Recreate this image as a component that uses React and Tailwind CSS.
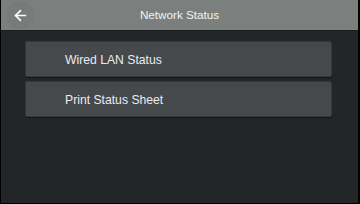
import { ArrowLeft } from 'lucide-react';

const ITEMS = ['Wired LAN Status', 'Print Status Sheet'];

export default function App() {
  return (
    <div
      className="w-[360px] h-[204px] flex flex-col bg-[#222628] border-l border-r-2 border-b border-black overflow-hidden"
      style={{ fontFamily: '"Liberation Sans", Arial, sans-serif' }}
    >
      <div className="h-[31px] flex-shrink-0 flex items-center pl-[5px] bg-[#7b7f7e] border-b border-[#1b1e1f] relative">
        <button className="w-[28px] h-[28px] rounded-full flex items-center justify-center bg-[#777b7a]">
          <ArrowLeft className="w-[17px] h-[17px] text-white" strokeWidth={2.4} />
        </button>
        <h1 className="absolute left-0 right-0 text-center text-[11.7px] text-[#f2f2f2] pointer-events-none">
          Network Status
        </h1>
      </div>

      <div className="flex flex-col gap-[4px] pt-[10px] pl-[24px] pr-[26px]">
        {ITEMS.map(label => (
          <button
            key={label}
            className="h-[36px] w-full flex items-center pl-[39px] pt-[2px] text-left text-[12.2px] text-[#ececec] bg-[#45494c] rounded-[2px] border border-[#35393b] shadow-[0_1px_1px_rgba(0,0,0,0.5)]"
          >
            {label}
          </button>
        ))}
      </div>
    </div>
  );
}
